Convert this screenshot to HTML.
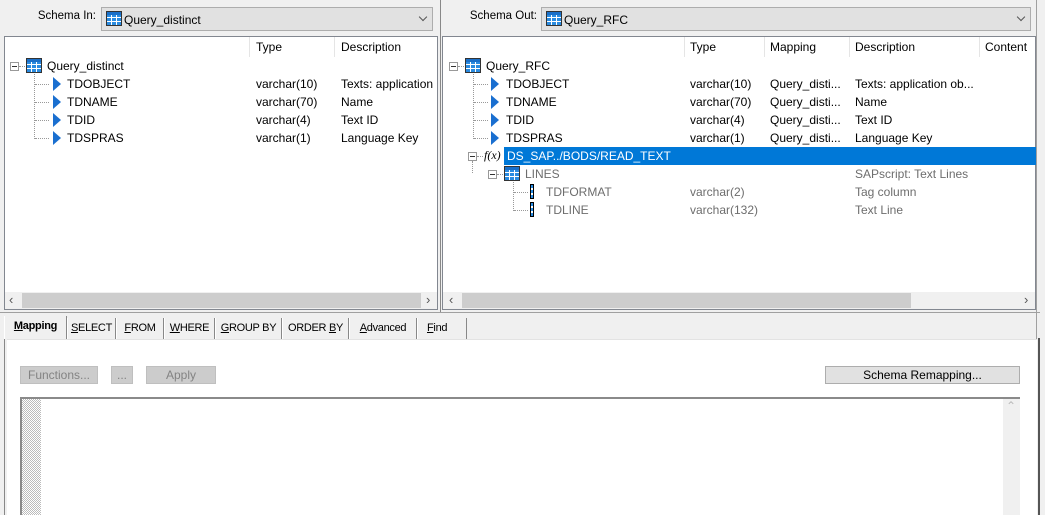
<!DOCTYPE html>
<html><head><meta charset="utf-8"><style>
*{box-sizing:border-box;margin:0;padding:0}
body{width:1045px;height:515px;overflow:hidden;background:#f0f0f0;font-family:"Liberation Sans",sans-serif;font-size:12px;color:#000;position:relative}
.a{position:absolute;white-space:nowrap}
.box{position:absolute;background:#fff;border:1px solid #828790}
.combo{position:absolute;background:#e1e1e1;border:1px solid #adadad}
.hdr{position:absolute;top:0;height:21px;line-height:21px;padding-left:6px}
.sep{position:absolute;top:0;width:1px;height:20px;background:#e5e5e5}
.row{position:absolute;height:18px;line-height:18px}
.tbl{position:absolute;width:16px;height:15px;border:1px solid #333;background:
repeating-linear-gradient(90deg,transparent 0 4px,#fff 4px 5px),
repeating-linear-gradient(0deg,#2a8be0 0 3px,#fff 3px 4px);}
.tbl:before{content:"";position:absolute;left:0;top:0;right:0;height:3px;background:#1a6fc8}
.arr{position:absolute;width:0;height:0;border-left:8px solid #1a6fd0;border-top:7px solid transparent;border-bottom:7px solid transparent}
.pm{position:absolute;width:9px;height:9px;border:1px solid #999;background:#fff}
.pm:after{content:"";position:absolute;left:1px;top:3px;width:5px;height:1px;background:#333}
.dh{position:absolute;height:1px;border-top:1px dotted #999}
.dv{position:absolute;width:1px;border-left:1px dotted #999}
.sb{position:absolute;height:17px;background:#f0f0f0}
.btn{position:absolute;height:18px;line-height:16px;text-align:center;border:1px solid #bfbfbf;background:#ccc;color:#838383}
.tab{position:absolute;top:318px;height:21px;line-height:21px;text-align:center;font-size:11px;letter-spacing:-0.3px;border-right:1px solid #888;border-left:1px solid #fff;overflow:hidden}
.col{position:absolute;width:4px;height:15px;border:1px solid #000;background:linear-gradient(#2a8be0 0 3px,#fff 3px 5px,#2a8be0 5px 8px,#fff 8px 10px,#2a8be0 10px)}
.g{color:#6d6d6d}
.chev{position:absolute;width:6px;height:6px;border-right:1px solid #555;border-bottom:1px solid #555;transform:rotate(45deg)}
</style></head><body>

<!-- left top -->
<div class="a" style="left:0;width:96px;text-align:right;top:10px;font-size:11.5px">Schema In:</div>
<div class="combo" style="left:101px;top:7px;width:332px;height:24px">
 <div class="tbl" style="left:4px;top:3px"></div>
 <div class="a" style="left:22px;top:5px">Query_distinct</div>
 <div class="chev" style="left:318px;top:6px"></div>
</div>
<div class="box" style="left:4px;top:36px;width:434px;height:274px">
 <div class="hdr" style="left:245px">Type</div><div class="sep" style="left:244px"></div>
 <div class="hdr" style="left:330px">Description</div><div class="sep" style="left:329px"></div>
 <div class="pm" style="left:5px;top:25px"></div><div class="dh" style="left:14px;top:29px;width:6px"></div>
 <div class="tbl" style="left:21px;top:21px"></div>
 <div class="row" style="left:42px;top:20px">Query_distinct</div>
 <div class="dv" style="left:29px;top:37px;height:65px"></div>
 <div class="dh" style="left:30px;top:47px;width:14px"></div><div class="arr" style="left:48px;top:40px"></div><div class="row" style="left:62px;top:38px">TDOBJECT</div>
 <div class="dh" style="left:30px;top:65px;width:14px"></div><div class="arr" style="left:48px;top:58px"></div><div class="row" style="left:62px;top:56px">TDNAME</div>
 <div class="dh" style="left:30px;top:83px;width:14px"></div><div class="arr" style="left:48px;top:76px"></div><div class="row" style="left:62px;top:74px">TDID</div>
 <div class="dh" style="left:30px;top:101px;width:14px"></div><div class="arr" style="left:48px;top:94px"></div><div class="row" style="left:62px;top:92px">TDSPRAS</div>
 <div class="row" style="left:251px;top:38px">varchar(10)</div><div class="row" style="left:336px;top:38px">Texts: application</div>
 <div class="row" style="left:251px;top:56px">varchar(70)</div><div class="row" style="left:336px;top:56px">Name</div>
 <div class="row" style="left:251px;top:74px">varchar(4)</div><div class="row" style="left:336px;top:74px">Text ID</div>
 <div class="row" style="left:251px;top:92px">varchar(1)</div><div class="row" style="left:336px;top:92px">Language Key</div>
 <div class="sb" style="left:0;top:255px;width:432px"></div>
 <div class="a" style="left:17px;top:256px;width:399px;height:15px;background:#cdcdcd"></div>
 <div class="a" style="left:4px;top:255px;font-size:13px;color:#555">&lsaquo;</div>
 <div class="a" style="left:421px;top:255px;font-size:13px;color:#555">&rsaquo;</div>
</div>

<div class="a" style="left:440px;top:0;width:1px;height:312px;background:#888"></div>

<!-- right top -->
<div class="a" style="left:440px;width:97px;text-align:right;top:10px;font-size:11.5px">Schema Out:</div>
<div class="combo" style="left:541px;top:7px;width:490px;height:24px">
 <div class="tbl" style="left:4px;top:3px"></div>
 <div class="a" style="left:22px;top:5px">Query_RFC</div>
 <div class="chev" style="left:476px;top:6px"></div>
</div>
<div class="box" style="left:442px;top:36px;width:594px;height:274px">
 <div class="hdr" style="left:241px">Type</div><div class="sep" style="left:241px"></div>
 <div class="hdr" style="left:321px">Mapping</div><div class="sep" style="left:321px"></div>
 <div class="hdr" style="left:406px">Description</div><div class="sep" style="left:406px"></div>
 <div class="hdr" style="left:536px;width:56px;overflow:hidden">Content T</div><div class="sep" style="left:536px"></div>
 <div class="pm" style="left:6px;top:25px"></div><div class="dh" style="left:15px;top:29px;width:6px"></div>
 <div class="tbl" style="left:22px;top:21px"></div>
 <div class="row" style="left:43px;top:20px">Query_RFC</div>
 <div class="dv" style="left:30px;top:37px;height:65px"></div>
 <div class="dh" style="left:31px;top:47px;width:14px"></div><div class="arr" style="left:48px;top:40px"></div><div class="row" style="left:63px;top:38px">TDOBJECT</div>
 <div class="dh" style="left:31px;top:65px;width:14px"></div><div class="arr" style="left:48px;top:58px"></div><div class="row" style="left:63px;top:56px">TDNAME</div>
 <div class="dh" style="left:31px;top:83px;width:14px"></div><div class="arr" style="left:48px;top:76px"></div><div class="row" style="left:63px;top:74px">TDID</div>
 <div class="dh" style="left:31px;top:101px;width:14px"></div><div class="arr" style="left:48px;top:94px"></div><div class="row" style="left:63px;top:92px">TDSPRAS</div>
 <div class="row" style="left:247px;top:38px">varchar(10)</div><div class="row" style="left:327px;top:38px">Query_disti...</div><div class="row" style="left:412px;top:38px">Texts: application ob...</div>
 <div class="row" style="left:247px;top:56px">varchar(70)</div><div class="row" style="left:327px;top:56px">Query_disti...</div><div class="row" style="left:412px;top:56px">Name</div>
 <div class="row" style="left:247px;top:74px">varchar(4)</div><div class="row" style="left:327px;top:74px">Query_disti...</div><div class="row" style="left:412px;top:74px">Text ID</div>
 <div class="row" style="left:247px;top:92px">varchar(1)</div><div class="row" style="left:327px;top:92px">Query_disti...</div><div class="row" style="left:412px;top:92px">Language Key</div>
 <div class="pm" style="left:25px;top:115px"></div><div class="dh" style="left:34px;top:119px;width:6px"></div>
 <div class="a" style="left:41px;top:111px;font-style:italic;font-family:'Liberation Serif',serif;font-size:12px">f(x)</div>
 <div class="a" style="left:61px;top:110px;width:532px;height:18px;background:#0078d7;color:#fff;line-height:18px;padding-left:3px">DS_SAP../BODS/READ_TEXT</div>
 <div class="dv" style="left:29px;top:124px;height:12px"></div>
 <div class="pm" style="left:45px;top:133px"></div><div class="dh" style="left:54px;top:137px;width:6px"></div>
 <div class="tbl" style="left:61px;top:129px"></div>
 <div class="row g" style="left:82px;top:128px">LINES</div>
 <div class="row g" style="left:412px;top:128px">SAPscript: Text Lines</div>
 <div class="dv" style="left:70px;top:145px;height:29px"></div>
 <div class="dh" style="left:71px;top:155px;width:14px"></div><div class="col" style="left:87px;top:147px"></div><div class="row g" style="left:103px;top:146px">TDFORMAT</div>
 <div class="dh" style="left:71px;top:173px;width:14px"></div><div class="col" style="left:87px;top:165px"></div><div class="row g" style="left:103px;top:164px">TDLINE</div>
 <div class="row g" style="left:247px;top:146px">varchar(2)</div><div class="row g" style="left:412px;top:146px">Tag column</div>
 <div class="row g" style="left:247px;top:164px">varchar(132)</div><div class="row g" style="left:412px;top:164px">Text Line</div>
 <div class="sb" style="left:0;top:255px;width:592px"></div>
 <div class="a" style="left:19px;top:256px;width:449px;height:15px;background:#cdcdcd"></div>
 <div class="a" style="left:6px;top:255px;font-size:13px;color:#555">&lsaquo;</div>
 <div class="a" style="left:581px;top:255px;font-size:13px;color:#555">&rsaquo;</div>
</div>

<div class="a" style="left:0;top:312px;width:1040px;height:1px;background:#a0a0a0"></div>
<div class="a" style="left:1036px;top:0;width:1px;height:515px;background:#a0a0a0"></div>
<div class="a" style="left:1038px;top:338px;width:2px;height:177px;background:#555"></div>

<div class="a" style="left:4px;top:317px;width:1px;height:198px;background:#888"></div>
<div class="tab" style="left:4px;top:316px;width:63px;height:23px;font-weight:bold;background:#f0f0f0"><u>M</u>apping</div>
<div class="tab" style="left:67px;width:49px"><u>S</u>ELECT</div>
<div class="tab" style="left:116px;width:48px"><u>F</u>ROM</div>
<div class="tab" style="left:164px;width:51px"><u>W</u>HERE</div>
<div class="tab" style="left:215px;width:67px"><u>G</u>ROUP BY</div>
<div class="tab" style="left:282px;width:67px">ORDER <u>B</u>Y</div>
<div class="tab" style="left:349px;width:68px"><u>A</u>dvanced</div>
<div class="tab" style="left:417px;width:50px;text-align:left;padding-left:9px"><u>F</u>ind</div>
<div class="a" style="left:7px;top:339px;width:1030px;height:176px;background:#fff;border-top:1px solid #e3e3e3"></div>

<div class="btn" style="left:20px;top:366px;width:78px">Functions...</div>
<div class="btn" style="left:111px;top:366px;width:22px">...</div>
<div class="btn" style="left:146px;top:366px;width:70px">Apply</div>
<div class="btn" style="left:825px;top:366px;width:195px;background:#e1e1e1;border-color:#adadad;color:#000">Schema Remapping...</div>

<div class="a" style="left:20px;top:397px;width:1000px;height:118px;border-top:2px solid #8a8a8a;border-left:2px solid #8a8a8a;background:#fff"></div>
<div class="a" style="left:22px;top:399px;width:19px;height:116px;background:repeating-conic-gradient(#bbb 0 25%,#fff 0 50%) 0 0/2px 2px"></div>
<div class="a" style="left:1003px;top:399px;width:17px;height:116px;background:#f0f0f0"></div>
<div class="a" style="left:1006px;top:399px;color:#bbb;font-size:12px">&#8963;</div>
</body></html>
